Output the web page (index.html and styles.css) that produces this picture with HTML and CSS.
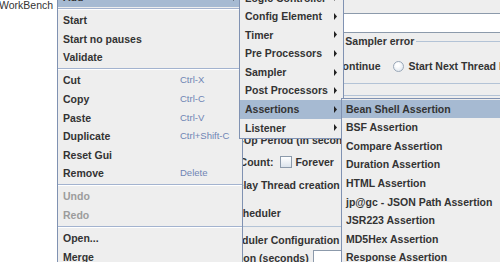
FILE: index.html
```html
<!DOCTYPE html>
<html lang="en">

<head>
    <meta charset="UTF-8">
    <title>JMeter - Add Assertion</title>
    <link rel="stylesheet" href="styles.css">
</head>

<body>
    <div class="window">
        <div class="tree">
            <div class="tree-item">WorkBench</div>
        </div>
        <div class="panel">
            <div class="comments">
                <span class="label">Comments:</span>
                <div class="field"></div>
            </div>
            <fieldset class="group group-error">
                <legend>Action to be taken after a Sampler error</legend>
                <div class="radios">
                    <span class="radio"></span><span class="radio-text">Continue</span>
                    <span class="radio"></span><span class="radio-text">Start Next Thread Loop</span>
                </div>
            </fieldset>
            <fieldset class="group group-thread">
                <legend>Thread Properties</legend>
                <div class="prop">Number of Threads (users):</div>
                <div class="prop">Ramp-Up Period (in seconds):</div>
                <div class="prop">Loop Count:<span class="check check-loop"></span>Forever</div>
                <div class="prop prop-delay"><span class="check"></span>Delay Thread creation until needed</div>
                <div class="prop prop-sched"><span class="check"></span>Scheduler</div>
            </fieldset>
            <fieldset class="group group-sched">
                <legend>Scheduler Configuration</legend>
                <div class="prop prop-duration">Duration (seconds)<div class="field field-small"></div></div>
            </fieldset>
        </div>
    </div>

    <div class="menu menu-main">
        <div class="item active"><span class="name">Add</span>
            <svg class="arrow" width="3" height="7" viewBox="0 0 3 7"><polygon points="0,0 3,3.5 0,7" /></svg>
        </div>
        <div class="sep"></div>
        <div class="item"><span class="name">Start</span></div>
        <div class="item"><span class="name">Start no pauses</span></div>
        <div class="item"><span class="name">Validate</span></div>
        <div class="sep"></div>
        <div class="item"><span class="name">Cut</span><span class="key">Ctrl-X</span></div>
        <div class="item"><span class="name">Copy</span><span class="key">Ctrl-C</span></div>
        <div class="item"><span class="name">Paste</span><span class="key">Ctrl-V</span></div>
        <div class="item"><span class="name">Duplicate</span><span class="key">Ctrl+Shift-C</span></div>
        <div class="item"><span class="name">Reset Gui</span></div>
        <div class="item"><span class="name">Remove</span><span class="key">Delete</span></div>
        <div class="sep"></div>
        <div class="item off"><span class="name">Undo</span></div>
        <div class="item off"><span class="name">Redo</span></div>
        <div class="sep"></div>
        <div class="item"><span class="name">Open...</span></div>
        <div class="item"><span class="name">Merge</span></div>
    </div>

    <div class="menu menu-add">
        <div class="item">Logic Controller<svg class="arrow" width="3" height="7" viewBox="0 0 3 7"><polygon points="0,0 3,3.5 0,7" /></svg></div>
        <div class="item">Config Element<svg class="arrow" width="3" height="7" viewBox="0 0 3 7"><polygon points="0,0 3,3.5 0,7" /></svg></div>
        <div class="item">Timer<svg class="arrow" width="3" height="7" viewBox="0 0 3 7"><polygon points="0,0 3,3.5 0,7" /></svg></div>
        <div class="item">Pre Processors<svg class="arrow" width="3" height="7" viewBox="0 0 3 7"><polygon points="0,0 3,3.5 0,7" /></svg></div>
        <div class="item">Sampler<svg class="arrow" width="3" height="7" viewBox="0 0 3 7"><polygon points="0,0 3,3.5 0,7" /></svg></div>
        <div class="item">Post Processors<svg class="arrow" width="3" height="7" viewBox="0 0 3 7"><polygon points="0,0 3,3.5 0,7" /></svg></div>
        <div class="item active">Assertions<svg class="arrow" width="3" height="7" viewBox="0 0 3 7"><polygon points="0,0 3,3.5 0,7" /></svg></div>
        <div class="item">Listener<svg class="arrow" width="3" height="7" viewBox="0 0 3 7"><polygon points="0,0 3,3.5 0,7" /></svg></div>
    </div>

    <div class="menu menu-assert">
        <div class="item active">Bean Shell Assertion</div>
        <div class="item">BSF Assertion</div>
        <div class="item">Compare Assertion</div>
        <div class="item">Duration Assertion</div>
        <div class="item">HTML Assertion</div>
        <div class="item">jp@gc - JSON Path Assertion</div>
        <div class="item">JSR223 Assertion</div>
        <div class="item">MD5Hex Assertion</div>
        <div class="item">Response Assertion</div>
    </div>
</body>

</html>
```

FILE: styles.css
```css
body {
    margin: 0;
    padding: 0;
    width: 500px;
    height: 262px;
    overflow: hidden;
    position: relative;
    background-color: #ffffff;
    font-family: "Liberation Sans", Arial, sans-serif;
    color: #333333;
}

.window {
    display: grid;
    grid-template-columns: 200px 1fr;
    height: 262px;
}

.tree {
    background-color: #ffffff;
}

.tree-item {
    font-size: 10.5px;
    line-height: 12px;
    margin-top: -1px;
    margin-left: -1px;
}

.panel {
    background-color: #eeeeee;
    padding-left: 5px;
    overflow: hidden;
    font-size: 10.5px;
    font-weight: bold;
}

.comments {
    display: flex;
    align-items: center;
    margin-top: 13px;
    height: 20px;
}

.comments .label {
    width: 60px;
}

.field {
    flex: 1;
    height: 20px;
    box-sizing: border-box;
    background-color: #ffffff;
    border: 1px solid #8c9aab;
    margin-right: -10px;
}

.group {
    margin: 0 -10px 0 0;
    padding: 0 5px;
    border: 1px solid #b3c3d6;
    min-inline-size: 0;
}

.group legend {
    font-size: 10.5px;
    font-weight: bold;
    line-height: 11px;
    padding: 0 2px;
    margin-left: 4px;
    white-space: nowrap;
}

.group-error {
    margin-top: 3px;
    padding-bottom: 7px;
}

.radios {
    display: flex;
    align-items: center;
    height: 20px;
    margin-top: 9px;
    padding-left: 108px;
    white-space: nowrap;
}

.radio {
    width: 11px;
    height: 11px;
    box-sizing: border-box;
    border-radius: 50%;
    border: 1px solid #9aa8b8;
    background: radial-gradient(circle at 40% 35%, #ffffff 20%, #d6dfe9 100%);
    flex: none;
}

.radio-text {
    margin-left: 5px;
    margin-right: 12px;
}

.group-thread {
    margin-top: 6px;
    padding-top: 6px;
    padding-bottom: 3px;
}

.prop {
    display: flex;
    align-items: center;
    height: 22px;
    white-space: nowrap;
}

.prop-delay {
    height: 24px;
}

.prop-sched {
    height: 20px;
    margin-top: 6px;
}

.check {
    width: 12px;
    height: 12px;
    box-sizing: border-box;
    border: 1px solid #8c9aab;
    background: linear-gradient(#ffffff, #dbe3ec);
    margin-left: 2px;
    margin-right: 5px;
    flex: none;
}

.check-loop {
    margin-left: 7px;
    margin-right: 3px;
}

.group-sched {
    margin-top: 8px;
    padding-top: 2px;
}

.prop-duration {
    height: 20px;
    padding-left: 2px;
}

.field-small {
    flex: none;
    width: 80px;
    height: 17px;
    margin-left: 4px;
}

/* popup menus */

.menu {
    position: absolute;
    background-color: #eeeeee;
    border: 1px solid #8092b2;
    padding: 1px 0;
    font-size: 10.5px;
    font-weight: bold;
    color: #333333;
}

.menu-main {
    left: 57px;
    top: -14px;
    width: 184px;
}

.menu-add {
    left: 239px;
    top: -13.5px;
    width: 103px;
}

.menu-assert {
    left: 341px;
    top: 97.7px;
    width: 200px;
}

.item {
    display: flex;
    align-items: center;
    height: 18.6px;
    line-height: 18.6px;
    padding-left: 5px;
    white-space: nowrap;
}

.menu-assert .item {
    padding-left: 4px;
}

.item.active {
    background-color: #a6bad2;
}

.item.off {
    color: #9c9c9c;
}

.item .name {
    width: 117px;
}

.key {
    font-size: 9.5px;
    font-weight: normal;
    color: #6f84b4;
}

.arrow {
    margin-left: auto;
    margin-right: 6px;
    fill: #222222;
}

.sep {
    margin: 1.5px 0 1px;
    border-top: 1px solid #a3b3cf;
    border-bottom: 1px solid #ffffff;
}
```
